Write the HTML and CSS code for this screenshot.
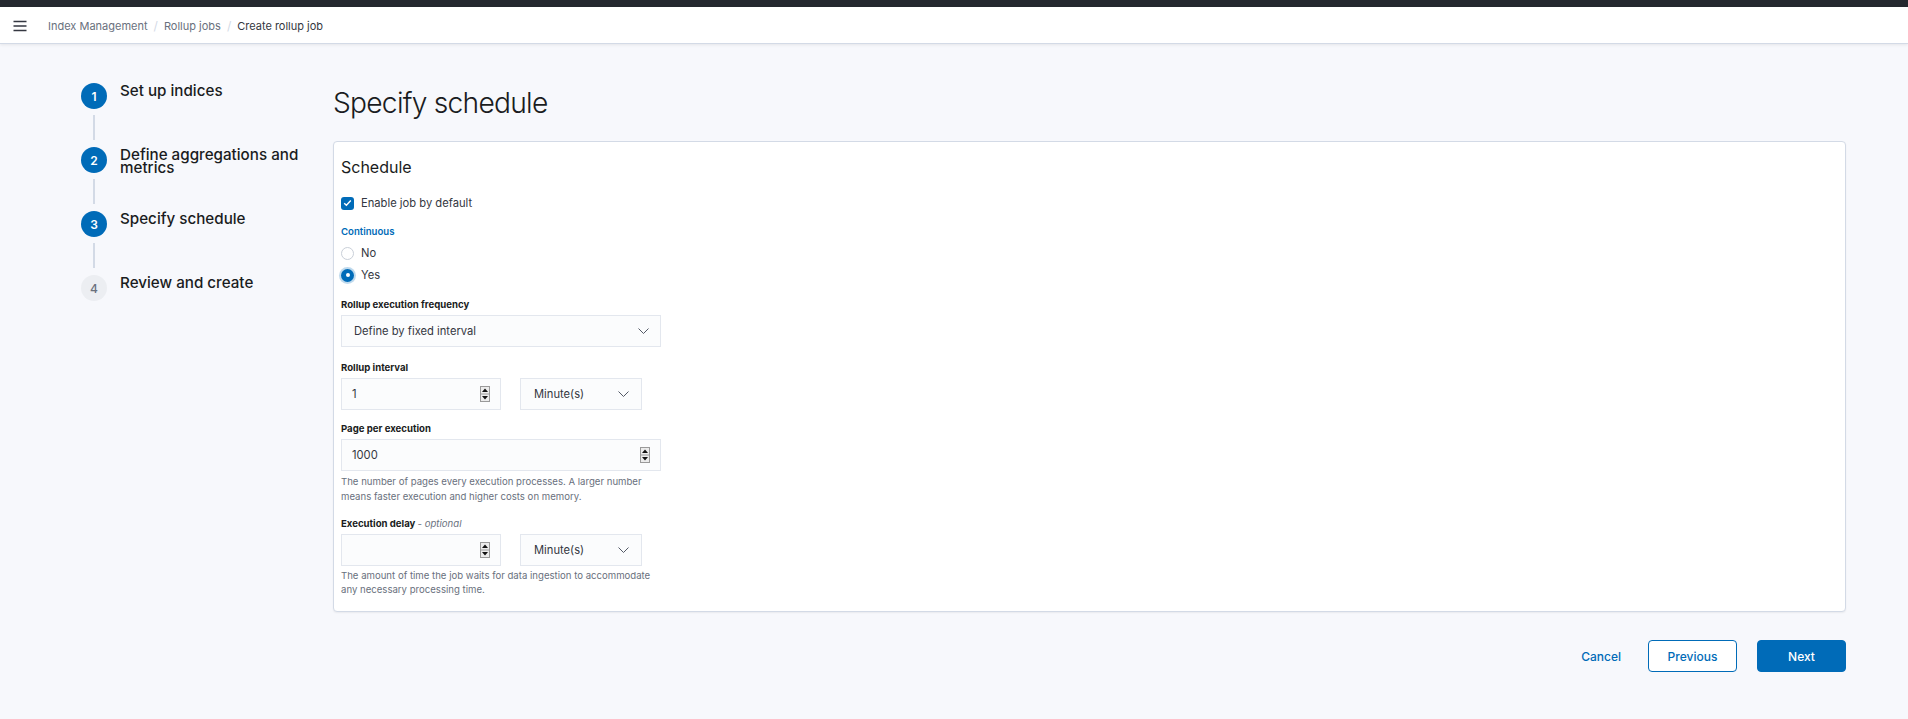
FILE: index.html
```html
<!DOCTYPE html>
<html lang="en">
<head>
<meta charset="utf-8">
<title>Create rollup job</title>
<link rel="stylesheet" href="styles.css">
</head>
<body>
<div class="topbar"></div>
<header class="header">
  <button class="menu" aria-label="Menu">
    <svg width="14" height="12" viewBox="0 0 14 12"><path d="M0.5 1.5h13M0.5 6h13M0.5 10.5h13" stroke="#343741" stroke-width="1.6" fill="none"/></svg>
  </button>
  <nav class="crumbs">
    <span class="crumb">Index Management</span>
    <span class="sep">/</span>
    <span class="crumb">Rollup jobs</span>
    <span class="sep">/</span>
    <span class="crumb current">Create rollup job</span>
  </nav>
</header>
<main class="page">
  <ol class="steps">
    <li class="step">
      <div class="rail"><span class="num">1</span><span class="line"></span></div>
      <div class="step-title">Set up indices</div>
    </li>
    <li class="step">
      <div class="rail"><span class="num">2</span><span class="line"></span></div>
      <div class="step-title">Define aggregations and metrics</div>
    </li>
    <li class="step">
      <div class="rail"><span class="num">3</span><span class="line"></span></div>
      <div class="step-title">Specify schedule</div>
    </li>
    <li class="step">
      <div class="rail"><span class="num todo">4</span></div>
      <div class="step-title">Review and create</div>
    </li>
  </ol>
  <section class="content">
    <h1 class="title">Specify schedule</h1>
    <div class="panel">
      <h2 class="panel-title">Schedule</h2>
      <div class="check-row">
        <span class="checkbox"><svg width="9" height="8" viewBox="0 0 9 8"><path d="M1.2 4.2l2.2 2.1L7.8 1.6" stroke="#fff" stroke-width="1.4" fill="none"/></svg></span>
        <span class="opt-label">Enable job by default</span>
      </div>
      <div class="legend">Continuous</div>
      <div class="radio-row"><span class="radio"></span><span class="opt-label">No</span></div>
      <div class="radio-row"><span class="radio on"></span><span class="opt-label">Yes</span></div>

      <div class="field first">
        <div class="label">Rollup execution frequency</div>
        <div class="control select wide"><span>Define by fixed interval</span>
          <svg class="chev" width="11" height="6" viewBox="0 0 11 6"><path d="M0.5 0.5l5 5 5-5" stroke="#535966" stroke-width="1" fill="none"/></svg>
        </div>
      </div>

      <div class="field f2">
        <div class="label">Rollup interval</div>
        <div class="pair">
          <div class="control number"><span>1</span>
            <svg class="spin" width="10" height="16" viewBox="0 0 10 16"><rect x="0.5" y="0.5" width="9" height="15" fill="#ececec" stroke="#9a9a9a"/><path d="M0.5 8h9" stroke="#9a9a9a"/><path d="M5 2.5l-3 3.5h6z M5 13.5l-3-3.5h6z" fill="#111"/></svg>
          </div>
          <div class="control select unit"><span>Minute(s)</span>
            <svg class="chev" width="11" height="6" viewBox="0 0 11 6"><path d="M0.5 0.5l5 5 5-5" stroke="#535966" stroke-width="1" fill="none"/></svg>
          </div>
        </div>
      </div>

      <div class="field f3">
        <div class="label">Page per execution</div>
        <div class="control number wide"><span>1000</span>
          <svg class="spin" width="10" height="16" viewBox="0 0 10 16"><rect x="0.5" y="0.5" width="9" height="15" fill="#ececec" stroke="#9a9a9a"/><path d="M0.5 8h9" stroke="#9a9a9a"/><path d="M5 2.5l-3 3.5h6z M5 13.5l-3-3.5h6z" fill="#111"/></svg>
        </div>
        <p class="help">The number of pages every execution processes. A larger number means faster execution and higher costs on memory.</p>
      </div>

      <div class="field f4">
        <div class="label">Execution delay <span class="optional">- optional</span></div>
        <div class="pair">
          <div class="control number"><span></span>
            <svg class="spin" width="10" height="16" viewBox="0 0 10 16"><rect x="0.5" y="0.5" width="9" height="15" fill="#ececec" stroke="#9a9a9a"/><path d="M0.5 8h9" stroke="#9a9a9a"/><path d="M5 2.5l-3 3.5h6z M5 13.5l-3-3.5h6z" fill="#111"/></svg>
          </div>
          <div class="control select unit"><span>Minute(s)</span>
            <svg class="chev" width="11" height="6" viewBox="0 0 11 6"><path d="M0.5 0.5l5 5 5-5" stroke="#535966" stroke-width="1" fill="none"/></svg>
          </div>
        </div>
        <p class="help h2">The amount of time the job waits for data ingestion to accommodate any necessary processing time.</p>
      </div>
    </div>
    <div class="actions">
      <button class="btn empty">Cancel</button>
      <button class="btn outline">Previous</button>
      <button class="btn fill">Next</button>
    </div>
  </section>
</main>
</body>
</html>
```
FILE: styles.css
```css
* { box-sizing: border-box; }
html, body { margin: 0; padding: 0; }
body {
  background: #f7f8fc;
  font-family: Inter, "Noto Sans", sans-serif;
  color: #343741;
  min-height: 719px;
}
.topbar { height: 7px; background: #25282f; }
.header {
  height: 37px;
  background: #fff;
  display: flex;
  align-items: center;
  border-bottom: 1px solid #d3dae6;
  box-shadow: 0 1px 3px rgba(0,0,0,0.08);
}
.menu {
  border: 0; background: none; padding: 0;
  width: 14px; height: 12px;
  margin-left: 13px; margin-top: 1px;
  display: flex;
}
.crumbs {
  margin-left: 21px;
  display: flex; align-items: center; gap: 6px;
  font-size: 11px; line-height: 14px;
  margin-top: 1px;
}
.crumb { color: #69707d; }
.crumb.current { color: #343741; font-weight: 400; }
.sep { color: #d3dae6; font-size: 12px; }

.page {
  display: flex;
  padding: 41px 62px 0 81px;
}
.steps {
  list-style: none; margin: -2px 0 0 0; padding: 0;
  width: 252px; flex: none;
}
.step { display: flex; gap: 13px; }
.rail { width: 26px; display: flex; flex-direction: column; align-items: center; }
.num {
  width: 26px; height: 26px; border-radius: 50%;
  background: #006bb8; color: #fff;
  font-size: 12px; font-weight: 600;
  display: flex; align-items: center; justify-content: center;
}
.num.todo { background: #eceef2; color: #69707d; font-weight: 500; }
.line { width: 2px; height: 25px; background: #d3dae6; margin: 6px 0 7px; }
.step-title {
  font-size: 15.2px; line-height: 13.3px; font-weight: 500;
  color: #1a1c21; width: 190px; padding-top: 1px;
}

.content { flex: 1; }
.title {
  margin: 0; font-size: 28.2px; line-height: 36px;
  font-weight: 300; color: #1a1c21; letter-spacing: -0.75px;
}
.panel {
  margin-top: 20px;
  background: #fff;
  border: 1px solid #d3dae6;
  border-radius: 4px;
  box-shadow: 0 1px 2px rgba(0,0,0,0.06);
  padding: 15px 7px 12px;
  min-height: 471px;
}
.panel-title { margin: 0; font-size: 16px; line-height: 20px; font-weight: 400; color: #1a1c21; }
.check-row { display: flex; align-items: center; height: 16px; margin-top: 18px; gap: 7px; }
.checkbox {
  width: 13px; height: 13px; border-radius: 3px; background: #006bb8;
  display: flex; align-items: center; justify-content: center;
}
.opt-label { font-size: 11.2px; line-height: 14px; color: #343741; }
.legend { margin-top: 14px; font-size: 9.6px; line-height: 14px; font-weight: 600; color: #006bb8; }
.radio-row { display: flex; align-items: center; height: 22px; gap: 7px; }
.legend + .radio-row { margin-top: 3px; }
.radio {
  width: 13px; height: 13px; border-radius: 50%;
  border: 1px solid #c9cfd8; background: #fff;
}
.radio.on {
  border: 0; background: #006bb8;
  box-shadow: 0 0 0 2px rgba(0,107,184,0.25);
  display: flex; align-items: center; justify-content: center;
}
.radio.on::after { content: ""; width: 4px; height: 4px; border-radius: 50%; background: #fff; }

.field.first { margin-top: 12px; }
.field.f2 { margin-top: 14px; }
.field.f3 { margin-top: 12px; }
.field.f4 { margin-top: 13px; }
.label { font-size: 9.6px; line-height: 14px; font-weight: 700; color: #1a1c21; }
.optional { font-weight: 400; font-style: italic; color: #69707d; }
.control {
  margin-top: 3px;
  height: 32px;
  background: #fbfcfd;
  border: 1px solid #e3e7ee;
  display: flex; align-items: center; justify-content: space-between;
  font-size: 11.2px; color: #343741;
}
.wide { width: 320px; }
.select { padding: 0 11px 0 12px; }
.number { width: 160px; padding: 0 10px 0 10px; }
.number.wide { width: 320px; }
.unit { width: 122px; padding: 0 12px 0 13px; }
.pair { display: flex; gap: 19px; }
.pair .control { margin-top: 3px; }
.help {
  margin: 4px 0 0; max-width: 320px;
  font-size: 9.6px; line-height: 14.5px; color: #69707d;
}
.help.h2 { margin-top: 2.5px; }

.actions { display: flex; justify-content: flex-end; gap: 20px; margin-top: 28px; }
.btn {
  height: 32px; border-radius: 4px;
  font-family: Inter, "Noto Sans", sans-serif;
  font-size: 12px; font-weight: 500;
  cursor: pointer;
}
.btn.empty { background: none; border: 0; color: #006bb8; padding: 0 7px; }
.btn.outline { width: 89px; background: #fff; border: 1px solid #006bb8; color: #006bb8; }
.btn.fill { width: 89px; background: #006bb8; border: 1px solid #006bb8; color: #fff; }
```
